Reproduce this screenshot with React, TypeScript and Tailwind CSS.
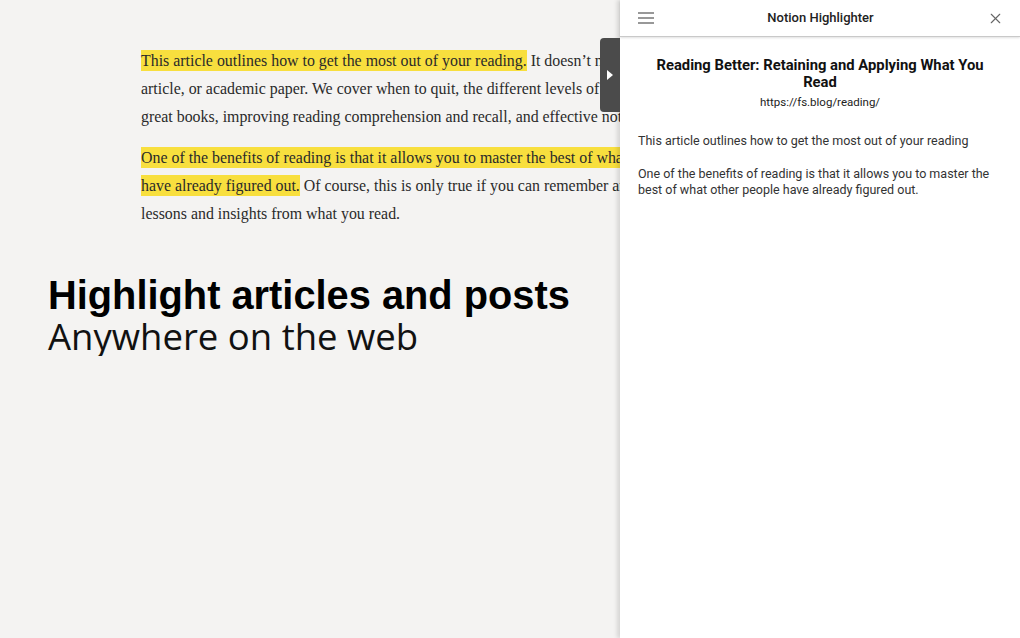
import { X } from "lucide-react";

const serif = { fontFamily: '"Liberation Serif", serif' };

function Hl({ children }: { children: React.ReactNode }) {
  return <span className="bg-[#f8df3e] py-[2px]">{children}</span>;
}

function Article() {
  return (
    <div className="pl-[141px] pt-[47px] text-[15.9px] leading-[28px] text-[#2a2a2a]" style={serif}>
      <p className="whitespace-nowrap">
        <Hl>This article outlines how to get the most out of your reading.</Hl> It doesn’t matter whether it’s a book, blog post,
        <br />
        article, or academic paper. We cover when to quit, the different levels of reading, how to read
        <br />
        great books, improving reading comprehension and recall, and effective note-taking.
      </p>
      <p className="mt-[13px] whitespace-nowrap">
        <Hl>One of the benefits of reading is that it allows you to master the best of what other people</Hl>
        <br />
        <Hl>have already figured out.</Hl> Of course, this is only true if you can remember and apply the
        <br />
        lessons and insights from what you read.
      </p>
    </div>
  );
}

function SidePanel() {
  return (
    <aside
      className="absolute right-0 top-0 flex h-full w-[400px] flex-col bg-white shadow-[-3px_0_4px_rgba(0,0,0,0.12)]"
      style={{ fontFamily: 'Roboto, "Liberation Sans", sans-serif' }}
    >
      {/* toggle tab */}
      <div className="absolute left-[-20px] top-[38px] flex h-[74px] w-[20px] items-center justify-center rounded-l-[4px] bg-[#4b4b4b]">
        <svg width="8" height="12" viewBox="0 0 8 12">
          <path d="M1 1 L7 6 L1 11 Z" fill="#fff" />
        </svg>
      </div>

      <header className="flex h-[37px] shrink-0 items-center justify-between border-b border-[#c9c9c9] px-[18px] shadow-[0_1px_2px_rgba(0,0,0,0.12)]">
        <svg width="16" height="12" viewBox="0 0 16 12">
          <path d="M0 1h16M0 6h16M0 11h16" stroke="#777" strokeWidth="1.4" />
        </svg>
        <span className="text-[13px] font-medium text-[#222]">Notion Highlighter</span>
        <X size={17} strokeWidth={1.6} className="mr-[-2px] text-[#666]" />
      </header>

      <div className="px-[18px] pt-[20px] text-center">
        <h2 className="px-[6px] text-[14.8px] font-bold leading-[17px] text-[#111]">
          Reading Better: Retaining and Applying What You Read
        </h2>
        <p className="mt-[3px] text-[11.5px] text-[#222]">https://fs.blog/reading/</p>
      </div>

      <div className="pl-[18px] pr-[22px] pt-[22px] text-[12.5px] leading-[16px] text-[#333]">
        <p>This article outlines how to get the most out of your reading</p>
        <p className="mt-[17px]">
          One of the benefits of reading is that it allows you to master the best of what other people have already figured out.
        </p>
      </div>
    </aside>
  );
}

export default function App() {
  return (
    <div className="relative h-[638px] w-[1020px] overflow-hidden bg-[#f4f3f2]">
      <div className="w-[620px] overflow-hidden">
        <Article />
        <div className="pl-[48px] pt-[46px]">
          <h1
            className="text-[39.8px] font-bold leading-[42px] text-black"
            style={{ fontFamily: '"Liberation Sans", Arial, sans-serif' }}
          >
            Highlight articles and posts
          </h1>
          <p className="text-[36.5px] font-normal leading-[40px] text-[#111]" style={{ fontFamily: '"Open Sans", sans-serif' }}>
            Anywhere on the web
          </p>
        </div>
      </div>
      <SidePanel />
    </div>
  );
}
